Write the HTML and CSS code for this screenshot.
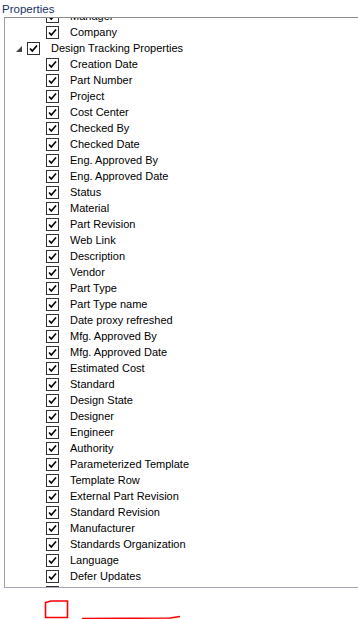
FILE: index.html
```html
<!DOCTYPE html>
<html>
<head>
<meta charset="utf-8">
<link rel="stylesheet" href="styles.css">
</head>
<body>
<div class="panel">
  <div class="label">Properties</div>
  <div class="box">
    <ul class="tree">
      <li class="row child"><span class="cb"><svg viewBox="0 0 13 13" width="13" height="13"><rect x="0.5" y="0.5" width="12" height="12" fill="#fff" stroke="#333"/><path d="M3 6.5 L5.3 9 L10 3.5" fill="none" stroke="#000" stroke-width="1.7"/></svg></span><span class="txt">Manager</span></li>
      <li class="row child"><span class="cb"><svg viewBox="0 0 13 13" width="13" height="13"><rect x="0.5" y="0.5" width="12" height="12" fill="#fff" stroke="#333"/><path d="M3 6.5 L5.3 9 L10 3.5" fill="none" stroke="#000" stroke-width="1.7"/></svg></span><span class="txt">Company</span></li>
      <li class="row parent"><span class="tog"><svg viewBox="0 0 8 8" width="8" height="8"><polygon points="7,1 7,7 1,7" fill="#444"/></svg></span><span class="cb"><svg viewBox="0 0 13 13" width="13" height="13"><rect x="0.5" y="0.5" width="12" height="12" fill="#fff" stroke="#333"/><path d="M3 6.5 L5.3 9 L10 3.5" fill="none" stroke="#000" stroke-width="1.7"/></svg></span><span class="txt">Design Tracking Properties</span></li>
    </ul>
    <ul class="tree" id="kids"></ul>
  </div>
  <svg class="marks" width="200" height="22" viewBox="0 0 200 22">
    <path d="M45.5 4.5 L51 3 L67.5 3 L67.5 19.5 L45.5 19.5 Z" fill="none" stroke="#f00" stroke-width="1.6"/>
    <path d="M82 20.5 L170 20 L180 18.5" fill="none" stroke="#f00" stroke-width="1.6"/>
  </svg>
</div>
<script src="app.js"></script>
</body>
</html>
```
FILE: app.js
```js
const names = ["Creation Date","Part Number","Project","Cost Center","Checked By","Checked Date","Eng. Approved By","Eng. Approved Date","Status","Material","Part Revision","Web Link","Description","Vendor","Part Type","Part Type name","Date proxy refreshed","Mfg. Approved By","Mfg. Approved Date","Estimated Cost","Standard","Design State","Designer","Engineer","Authority","Parameterized Template","Template Row","External Part Revision","Standard Revision","Manufacturer","Standards Organization","Language","Defer Updates","Locked"];
const cb = '<span class="cb"><svg viewBox="0 0 13 13" width="13" height="13"><rect x="0.5" y="0.5" width="12" height="12" fill="#fff" stroke="#333"/><path d="M3 6.5 L5.3 9 L10 3.5" fill="none" stroke="#000" stroke-width="1.7"/></svg></span>';
document.getElementById('kids').innerHTML = names.map(n => '<li class="row child">' + cb + '<span class="txt">' + n + '</span></li>').join('');
```
FILE: styles.css
```css
html, body { margin: 0; padding: 0; background: #fff; }
body { font-family: "Liberation Sans", Arial, sans-serif; font-size: 11px; color: #000; overflow: hidden; }
.panel { width: 358px; height: 619px; }
.label { height: 17px; line-height: 19px; padding-left: 2px; color: #17306e; font-size: 11.5px; }
.box { margin-left: 4px; width: 360px; height: 569px; border-top: 1px solid #8c8c8c; border-left: 1px solid #a0a0a0; border-bottom: 1px solid #a6a6b4; overflow: hidden; }
.tree { list-style: none; margin: 0; padding: 0; }
.tree:first-child { margin-top: -10px; }
.row { display: flex; align-items: center; height: 16px; white-space: nowrap; }
.row.child { padding-left: 41px; }
.row.parent { padding-left: 5px; }
.tog { width: 17px; display: flex; align-items: center; justify-content: center; padding-top: 1px; }
.cb { width: 13px; height: 13px; display: block; }
.cb svg { display: block; }
.txt { margin-left: 11px; line-height: 16px; }
.marks { display: block; margin-top: 10px; }
```
